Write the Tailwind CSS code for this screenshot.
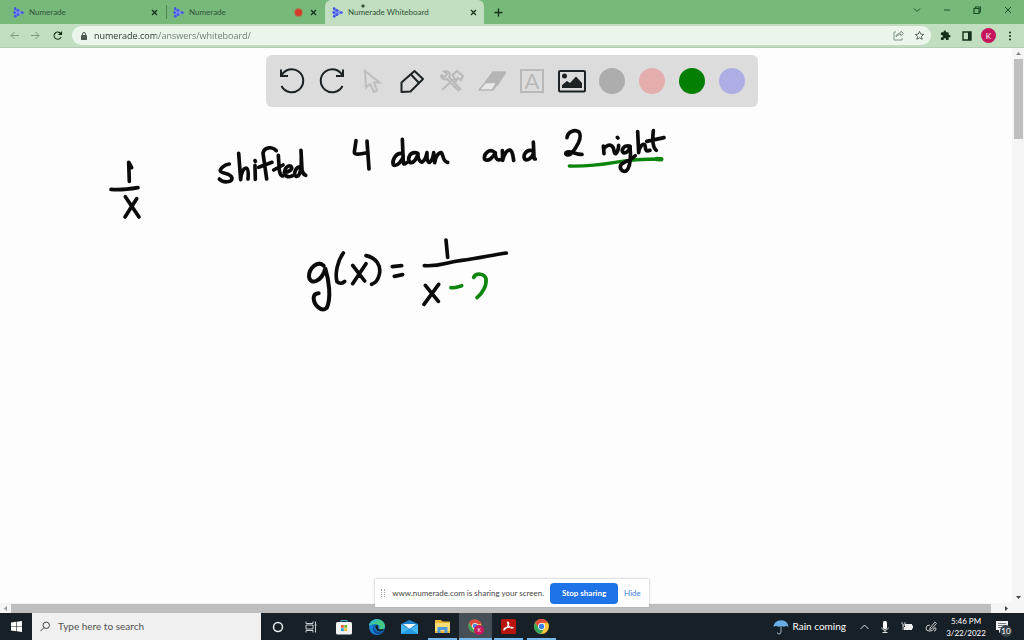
<!DOCTYPE html>
<html lang="en">
<head>
  <meta charset="UTF-8" />
  <meta name="viewport" content="width=device-width, initial-scale=1.0"/>
  <title>Numerade Whiteboard</title>
  <script src="https://cdn.jsdelivr.net/npm/@tailwindcss/browser@4"></script>
</head>
<body class="relative flex h-screen flex-col overflow-hidden bg-[#fdfdfd] font-[Lato,sans-serif] text-[8px]">
  <!-- Shared logo -->
  <svg class="hidden">
    <symbol id="logo" viewBox="0 0 20 20">
      <path d="M3 1 L19 10 L3 19 Z" fill="#7b92e8"/>
      <g fill="#4455e6"><circle cx="4" cy="3" r="2.5"/><circle cx="9" cy="6" r="2.5"/><circle cx="17" cy="10" r="2.5"/><circle cx="9" cy="14" r="2.5"/><circle cx="4" cy="17" r="2.5"/><circle cx="3" cy="10" r="2.5"/></g>
    </symbol>
  </svg>

  <!-- Tabs -->
  <header class="flex h-6 shrink-0 items-center bg-[#77b97a] text-[#2f5336]">
    <div class="flex h-full w-[166px] items-center pr-2 pl-[13px]">
      <svg class="mr-[5px] size-[11px]"><use href="#logo"/></svg>
      <span class="flex-1">Numerade</span>
      <button aria-label="Close tab" class="text-[#12331a]"><svg class="size-[7px]" viewBox="0 0 7 7" fill="none" stroke="currentColor" stroke-width="1.3"><path d="M1 1l5 5M6 1L1 6"/></svg></button>
    </div>
    <div class="flex h-full w-[159px] items-center pr-2">
      <i class="mr-1.5 h-3.5 w-px bg-[#4d8553]"></i>
      <svg class="mr-[5px] size-[11px]"><use href="#logo"/></svg>
      <span class="flex-1">Numerade</span>
      <span class="mr-2 size-[7px] rounded-full bg-[#d23c2c] ring-1 ring-[#a08a55]"></span>
      <button aria-label="Close tab" class="text-[#12331a]"><svg class="size-[7px]" viewBox="0 0 7 7" fill="none" stroke="currentColor" stroke-width="1.3"><path d="M1 1l5 5M6 1L1 6"/></svg></button>
    </div>
    <div class="relative flex h-full w-[159px] items-center rounded-t-md bg-[#c1dfc0] pr-[7px] pl-[7px]">
      <svg class="mr-[5px] size-[11px]"><use href="#logo"/></svg>
      <span class="flex-1">Numerade Whiteboard</span>
      <button aria-label="Close tab" class="text-[#12331a]"><svg class="size-[7px]" viewBox="0 0 7 7" fill="none" stroke="currentColor" stroke-width="1.3"><path d="M1 1l5 5M6 1L1 6"/></svg></button>
      <svg class="absolute top-1 left-9 size-1" viewBox="0 0 4 4"><path d="M2 0l2 2-2 2-2-2z" fill="#2f5336"/></svg>
    </div>
    <button aria-label="New tab" class="ml-2.5 text-[#12331a]"><svg class="size-[9px]" viewBox="0 0 9 9" fill="none" stroke="currentColor" stroke-width="1.4"><path d="M4.500 .5v8M.5 4.500h8"/></svg></button>
    <div class="ml-auto flex items-center pb-1 text-[#1b5024]">
      <button aria-label="Search tabs" class="grid w-[30px] place-items-center"><svg class="size-2" viewBox="0 0 8 8" fill="none" stroke="currentColor"><path d="M1 2.500l3 3 3-3"/></svg></button>
      <button aria-label="Minimize" class="grid w-[30px] place-items-center"><svg class="size-2" viewBox="0 0 8 8" fill="none" stroke="currentColor"><path d="M1 4h6"/></svg></button>
      <button aria-label="Restore" class="grid w-[30px] place-items-center"><svg class="size-2" viewBox="0 0 8 8" fill="none" stroke="currentColor" stroke-width="1.200"><path d="M1 2.500h5v5H1zM2.500 2V1h5v5H6.500"/></svg></button>
      <button aria-label="Close" class="grid w-8 place-items-center"><svg class="size-2" viewBox="0 0 8 8" fill="none" stroke="currentColor"><path d="M1 1l6 6M7 1L1 7"/></svg></button>
    </div>
  </header>

  <!-- Address bar -->
  <nav class="flex h-6 shrink-0 items-center border-b border-[#b4ccb6] bg-[#c1dfc0] text-[#14301a]">
    <button aria-label="Back" class="ml-2.5 text-[#7b9c7e]"><svg class="size-[9px]" viewBox="0 0 9 9" fill="none" stroke="currentColor"><path d="M9 4.500H1M4.500 1L1 4.500 4.500 8"/></svg></button>
    <button aria-label="Forward" class="ml-3 text-[#7b9c7e]"><svg class="size-[9px]" viewBox="0 0 9 9" fill="none" stroke="currentColor"><path d="M0 4.500h8M4.500 1L8 4.500 4.500 8"/></svg></button>
    <button aria-label="Reload" class="ml-3"><svg class="size-[11px]" viewBox="0 0 24 24" fill="currentColor"><path d="M18.500 5.500A9 9 0 1 0 21 15h-2.800a6.400 6.400 0 1 1-1.600-7.500L13 11h9V2z"/></svg></button>
    <div class="ml-[9px] flex h-[19px] flex-1 items-center rounded-full bg-[#ebf5ec] pr-1.5 pl-2">
      <svg class="mr-1.5 size-2" viewBox="0 0 8 8"><rect x="1" y="3" width="6" height="5" rx=".6" fill="#4d5a50"/><path d="M2.500 3.500V2a1.500 1.500 0 0 1 3 0v1.500" fill="none" stroke="#4d5a50"/></svg>
      <input aria-label="Address" value="numerade.com/answers/whiteboard/" class="flex-1 bg-[linear-gradient(90deg,#26332a_62px,#69776c_62px)] bg-clip-text font-['Open_Sans',sans-serif] text-[9px] text-transparent outline-none"/>
      <button aria-label="Share" class="text-[#839386]"><svg class="size-[11px]" viewBox="0 0 11 11" fill="none" stroke="currentColor"><path d="M3 2H1v8h8V8M3 7c0-2.500 2-4 5-4V1l2.500 2.500L8 6V4.500C5.500 4.500 4 5.500 3 7z"/></svg></button>
      <button aria-label="Bookmark" class="ml-2.5 text-[#4c5a4f]"><svg class="size-[11px]" viewBox="0 0 24 24" fill="none" stroke="currentColor" stroke-width="2"><path d="M12 3l2.700 6 6.500.6-4.900 4.300 1.500 6.400L12 17l-5.800 3.300 1.500-6.400-4.900-4.300 6.500-.6z"/></svg></button>
    </div>
    <button aria-label="Extensions" class="ml-[9px]"><svg class="size-[11px]" viewBox="0 0 24 24" fill="currentColor"><path d="M20.500 11H19V7a2 2 0 0 0-2-2h-4V3.500a2.500 2.500 0 0 0-5 0V5H4a2 2 0 0 0-2 2v3.800h1.500a2.700 2.700 0 0 1 0 5.400H2V20a2 2 0 0 0 2 2h3.800v-1.500a2.700 2.700 0 0 1 5.400 0V22H17a2 2 0 0 0 2-2v-4h1.500a2.500 2.500 0 0 0 0-5z"/></svg></button>
    <button aria-label="Side panel" class="ml-[11px]"><svg class="size-2.5" viewBox="0 0 10 10"><path d="M1 1h8v8H1z" fill="none" stroke="currentColor" stroke-width="1.4"/><path d="M6 1h3v8H6z" fill="currentColor"/></svg></button>
    <button aria-label="Profile" class="ml-[9px] grid size-[15px] place-items-center rounded-full bg-[#c5165b] text-[8px] text-white">K</button>
    <button aria-label="Menu" class="mr-3 ml-3"><svg class="h-2.5 w-1" viewBox="0 0 4 10" fill="currentColor"><circle cx="2" cy="1.400" r="1"/><circle cx="2" cy="5" r="1"/><circle cx="2" cy="8.600" r="1"/></svg></button>
  </nav>

  <!-- Whiteboard -->
  <main class="flex min-h-0 flex-1">
    <div class="relative min-w-0 flex-1 overflow-hidden">
      <svg class="h-[272px] w-[700px] max-w-none" viewBox="0 48 700 272" fill="none" stroke="#0b0b0b" stroke-linecap="round" stroke-linejoin="round" role="img" aria-label="1/x shifted 4 down and 2 right, g(x) = 1/(x-2)">
        <g transform="translate(100 120) scale(.33333)" stroke-width="11">
          <path d="M86 127L88 184M87 128L95 143M33 208C60 211 90 207 114 203M76 230L117 291M110 236L75 291"/>
          <path d="M388 132C373 134 360 146 361 153C364 162 392 158 396 174C397 187 370 190 358 177"/>
          <path d="M416 100L422 179C423 158 430 145 438 144C447 146 445 166 444 177M465 136L466 178M465 122L466 124"/>
          <path d="M529 92C517 79 493 80 489 99L500 177M476 142L516 127M535 106L538 151C540 163 545 168 549 168M521 150L549 135"/>
          <path d="M553 157C570 156 579 146 573 139C563 133 551 148 555 162C560 174 573 171 582 165M604 141C587 138 579 162 588 169C598 171 607 153 603 91L606 150C608 159 611 164 617 166"/>
        </g>
        <g transform="translate(340 120) scale(.33333)" stroke-width="11">
          <path d="M48 62L43 96C42 106 62 102 84 98M81 63L87 147"/>
          <path d="M187 101C169 96 155 120 160 135C171 142 189 119 190 108M187 58L190 129C191 135 196 131 201 127"/>
          <path d="M232 99C209 93 202 115 209 127C221 133 232 112 234 101C233 116 240 128 247 126C256 121 259 108 261 98C260 114 262 128 269 127C278 120 280 109 281 98L284 128C286 111 295 98 304 98C311 104 307 124 323 127"/>
          <path d="M465 98C448 82 430 103 434 118C444 126 460 113 466 98C465 113 471 122 480 119M487 92L488 121C491 104 501 89 510 90C519 94 519 110 521 121M577 92C558 88 548 105 554 117C562 124 578 113 581 98M580 66L582 110C582 115 584 117 586 117"/>
          <path d="M681 53C683 35 704 27 717 36C729 52 708 86 692 102C684 108 674 104 678 98C690 89 708 105 726 103"/>
          <path d="M790 78L792 101M791 88C798 75 808 73 816 78C824 84 820 101 827 101C835 95 835 84 836 76M832 52L834 54M866 78C851 75 842 91 850 98C862 101 869 87 870 79"/>
          <path d="M688 138C730 139 790 133 825 127C877 118 910 117 965 117" stroke="#0c850c" stroke-width="10"/>
          <path d="M950 117L964 118" stroke="#0c850c" stroke-width="13"/>
          <path d="M870 79C874 112 870 144 858 153C846 157 837 145 843 134C852 124 875 120 886 107M893 35L896 98C898 80 908 69 914 74C919 82 912 98 930 91M940 32C936 65 940 84 949 91M920 64L972 53"/>
        </g>
        <g transform="translate(295 230) scale(.33333)" stroke-width="11">
          <path d="M86 107C68 89 42 115 42 139C45 168 80 155 91 116C101 148 110 205 95 234C77 248 56 223 56 203C57 193 64 190 71 190" stroke-width="12"/>
          <path d="M145 69C128 92 119 130 126 155C134 163 143 160 149 154M173 106L209 153M213 101L173 161M213 77C244 83 259 107 253 133C249 151 241 159 230 163"/>
          <path d="M292 110L320 107M298 139L323 134M453 30L458 82M388 107C440 110 450 97 500 91C550 85 590 75 634 69M391 166L430 214M431 163L387 223"/>
          <path d="M468 173C477 175 490 170 500 167M536 142C543 128 568 130 573 146C576 167 562 190 546 203" stroke="#0c850c"/>
        </g>
      </svg>
    </div>
    <div class="flex w-3 shrink-0 flex-col items-center bg-[#f5f5f5]">
      <svg class="my-1 h-[3px] w-[5px] shrink-0" viewBox="0 0 5 3"><path d="M0 3l2.500-3L5 3z" fill="#888"/></svg>
      <div class="h-20 w-[9px] bg-[#bfbfbf]"></div>
      <svg class="mt-auto mb-1 h-[3px] w-[5px] shrink-0" viewBox="0 0 5 3"><path d="M0 0h5L2.500 3z" fill="#444"/></svg>
    </div>
  </main>
  <div class="flex h-2.5 shrink-0 items-center bg-[#f5f5f5]">
    <svg class="mx-1 h-[5px] w-[3px]" viewBox="0 0 3 5"><path d="M3 0v5L0 2.500z" fill="#999"/></svg>
    <div class="h-[9px] flex-1 bg-[#bebebe]"></div>
    <svg class="mr-4 ml-3.5 h-[5px] w-[3px]" viewBox="0 0 3 5"><path d="M0 0v5l3-2.500z" fill="#444"/></svg>
  </div>

  <!-- Drawing tools -->
  <div class="absolute inset-x-0 top-[55px] flex justify-center">
    <div class="flex rounded-md bg-[#dcdcdc] px-1.5 py-1.5 text-[#1d2225]">
      <button aria-label="Undo" class="grid size-10 place-items-center"><svg class="size-7" viewBox="0 0 28 28" fill="none" stroke="currentColor" stroke-width="2"><path d="M3 2.500V9H10M3.500 8.500A11.500 11.500 0 1 1 3.500 19"/></svg></button>
      <button aria-label="Redo" class="grid size-10 place-items-center"><svg class="size-7" viewBox="0 0 28 28" fill="none" stroke="currentColor" stroke-width="2"><path d="M25 2.500V9H18M24.500 8.500A11.500 11.500 0 1 0 24.500 19"/></svg></button>
      <button aria-label="Select" class="grid size-10 place-items-center text-[#bebebe]"><svg class="size-7" viewBox="0 0 28 28" fill="none" stroke="currentColor" stroke-width="2"><path d="M7 4L8 20.500L12 17L16 25L19 23.500L16 15.500H21.500Z"/></svg></button>
      <button aria-label="Pen" class="grid size-10 place-items-center"><svg class="size-7" viewBox="0 0 28 28" fill="none" stroke="currentColor" stroke-width="2" stroke-linejoin="round"><path d="M3.500 25V15.500L16.500 4L25 12L12.500 24.500ZM13 7.500L21 16"/></svg></button>
      <button aria-label="Tools" class="grid size-10 place-items-center text-[#b9b9b9]"><svg class="size-7" viewBox="0 0 28 28" fill="none" stroke="currentColor" stroke-width="2"><path d="M3 8L7 10L9 7L6 4.500C11 3 13 7 11 10L23 23M3 8C3 12 7 13 9 12L21 24M4 23L17 11M14.500 8L19 4L25 9L23 13L20 11L18 14Z"/></svg></button>
      <button aria-label="Eraser" class="grid size-10 place-items-center text-[#b5b5b5]"><svg class="size-7" viewBox="0 0 28 28" stroke="currentColor" stroke-width="1.500" stroke-linejoin="round"><path d="M15 5H28L19 18L17 15H7.500Z" fill="currentColor"/><path d="M7.500 15.500H19L14.500 23H1Z" fill="#e8e8e8"/><path d="M19 15.500L22 14L14.500 23Z" fill="currentColor"/></svg></button>
      <button aria-label="Text" class="grid size-10 place-items-center text-[#b9b9b9]"><span class="grid size-6 place-items-center border-2 border-current text-[22px]/5">A</span></button>
      <button aria-label="Image" class="grid size-10 place-items-center"><svg class="h-6 w-7" viewBox="0 0 28 24"><rect x="1" y="2" width="26" height="20.500" rx="1" fill="none" stroke="currentColor" stroke-width="2"/><circle cx="6.500" cy="7" r="2.500" fill="currentColor"/><path d="M4 19V16L9 12L12 14L18 7.500L24 14V19Z" fill="currentColor"/></svg></button>
      <button aria-label="Gray" class="grid size-10 place-items-center"><span class="size-[26px] rounded-full bg-[#adadad]"></span></button>
      <button aria-label="Red" class="grid size-10 place-items-center"><span class="size-[26px] rounded-full bg-[#e4aeae]"></span></button>
      <button aria-label="Green" class="grid size-10 place-items-center"><span class="size-[26px] rounded-full bg-[#038003]"></span></button>
      <button aria-label="Blue" class="grid size-10 place-items-center"><span class="size-[26px] rounded-full bg-[#aeaee4]"></span></button>
    </div>
  </div>

  <!-- Screen share notice -->
  <div class="absolute inset-x-0 bottom-[33px] flex justify-center">
    <div class="flex h-7 items-center bg-white pr-2 pl-1.5 text-[#454545] shadow-[0_0_2px_#aaa]">
      <i class="mr-[7px] h-2 w-1 border-x border-dotted border-[#aaa]"></i>
      <span class="mr-1.5">www.numerade.com is sharing your screen.</span>
      <button class="mr-1.5 h-[21px] w-[68px] rounded-sm bg-[#1f73e8] font-bold text-white">Stop sharing</button>
      <button class="text-[#3f7fe0]">Hide</button>
    </div>
  </div>

  <!-- Taskbar -->
  <footer class="flex h-[27px] shrink-0 items-center bg-[#172026] text-white">
    <button aria-label="Start" class="grid w-8 place-items-center"><svg class="size-[11px]" viewBox="0 0 11 11" fill="#fff"><path d="M0 1.500L5 .8V5.200H0zM5.600 .7L11 0v5.200H5.600zM0 5.800h5v4.400L0 9.500zM5.600 5.800H11V11l-5.400-.7z"/></svg></button>
    <label class="flex h-full w-[229px] items-center bg-[#f0f0f0] pl-2">
      <svg class="mr-2 size-[11px]" viewBox="0 0 11 11" fill="none" stroke="#333"><circle cx="6.800" cy="4.200" r="3.500"/><path d="M4.300 6.700L.5 10.500"/></svg>
      <input aria-label="Search" placeholder="Type here to search" class="w-full text-[10px] outline-none placeholder:text-[#505050]"/>
    </label>
    <div class="flex h-full">
      <button aria-label="Cortana" class="grid w-[33px] place-items-center"><svg class="size-3" viewBox="0 0 12 12"><circle cx="6" cy="6" r="4.500" fill="none" stroke="#e8edf0" stroke-width="1.500"/></svg></button>
      <button aria-label="Task view" class="grid w-[33px] place-items-center"><svg class="size-3" viewBox="0 0 12 12" fill="none" stroke="#c8ced2"><path d="M1 .5V2.500H8V.5M1 4h7v4H1zM1 11.500V9.500H8v2M10.500 .5v11M9.500 4h2"/></svg></button>
      <button aria-label="Store" class="grid w-[33px] place-items-center"><svg class="size-4" viewBox="0 0 16 16"><path d="M5 4V1.500h6V4" fill="none" stroke="#49aee0"/><rect y="3" width="16" height="12.500" rx="1.500" fill="#f1f3f4"/><path d="M5 6h2.800v2.800H5z" fill="#e85b3a"/><path d="M8.300 6h2.800v2.800H8.300z" fill="#76b82a"/><path d="M5 9.300h2.800v2.800H5z" fill="#2b9ce0"/><path d="M8.300 9.300h2.800v2.800H8.300z" fill="#f4b928"/></svg></button>
      <button aria-label="Edge" class="grid w-[33px] place-items-center"><svg class="size-4" viewBox="0 0 16 16"><circle cx="8" cy="8" r="8" fill="#1682d4"/><path d="M0 7C1-2 15-2 16 7c0 4-5 4-6 3 2-3-1-5-4-5S1 6 0 7z" fill="#45c989"/><path d="M0 7C1 2 7-1 11 2 7 1 2 4 0 7z" fill="#30b8df"/><path d="M7 5c-3 2-2 8 4 8 2 0 4-1 4-1-3 5-10 4-11-1-.5-3 1-5 3-6z" fill="#11519c"/><path d="M7 6c-1 1-1 4 2 6 2 1 5 0 6-1l1 1-2-2c-3 1-5 0-5-1 1-2 0-3-2-3z" fill="#172026"/></svg></button>
      <button aria-label="Mail" class="grid w-[33px] place-items-center"><svg class="h-3.5 w-[17px]" viewBox="0 0 17 14"><path d="M0 4L8.500 0 17 4v10H0z" fill="#1c83cf"/><path d="M2 4h13L8.500 9z" fill="#f3f7fb"/><path d="M0 4l8.500 5.500L17 4v10H0z" fill="#45b6f0"/><path d="M0 14l8.500-5.500L17 14z" fill="#2199e3"/></svg></button>
      <button aria-label="File Explorer" class="relative grid w-[33px] place-items-center"><svg class="h-[13px] w-[15px]" viewBox="0 0 15 13"><path d="M0 0h6l1.500 1.500H15V13H0z" fill="#e9b636"/><path d="M0 3h15v8H0z" fill="#fbdc75"/><path d="M2.500 13V7h10v6h-3v-3h-4v3z" fill="#4a9bdc"/></svg><i class="absolute inset-x-0.5 bottom-0 h-0.5 bg-[#76b9ed]"></i></button>
      <button aria-label="Chrome, Numerade" class="relative grid w-[33px] place-items-center bg-[#454f55]"><svg class="size-4" viewBox="0 0 16 16"><circle cx="7" cy="7" r="6.500" fill="#e6ba38"/><path d="M1 4a7 7 0 0 1 12.500 1H7L5 9z" fill="#d94b3d"/><path d="M1 4l4 6 3 3.500A7 7 0 0 1 1 4z" fill="#36a25a"/><circle cx="7" cy="7" r="3" fill="#eee"/><circle cx="7" cy="7" r="2.300" fill="#4c86df"/><circle cx="11" cy="11" r="5" fill="#c8195f"/><text x="9.500" y="13" font-size="5" fill="#fff">K</text></svg><i class="absolute inset-x-0 bottom-0 h-0.5 bg-[#76b9ed]"></i></button>
      <button aria-label="Acrobat" class="relative grid w-[33px] place-items-center"><svg class="size-[15px]" viewBox="0 0 15 15"><rect width="15" height="15" rx="1.500" fill="#b9150f"/><path d="M6.500 3c3 0 0 6-3.500 8-1-2 4-3.500 9-2.500-1 2-5.500-1-5.500-5.500z" fill="none" stroke="#fff" stroke-width="1.100"/></svg><i class="absolute inset-x-0.5 bottom-0 h-0.5 bg-[#76b9ed]"></i></button>
      <button aria-label="Chrome" class="relative grid w-[33px] place-items-center"><svg class="size-[15px]" viewBox="0 0 14 14"><circle cx="7" cy="7" r="7" fill="#f6c63b"/><path d="M1 3.500a7 7 0 0 1 12.200 0H7L4.500 8.500z" fill="#e14b3d"/><path d="M1 3.500l3.500 5L9 9.500 6.500 14A7 7 0 0 1 1 3.500z" fill="#36a558"/><circle cx="7" cy="7" r="3.200" fill="#fff"/><circle cx="7" cy="7" r="2.500" fill="#397fe5"/></svg><i class="absolute inset-x-0.5 bottom-0 h-0.5 bg-[#76b9ed]"></i></button>
    </div>
    <div class="ml-auto flex h-full items-center">
      <button class="flex items-center gap-1 text-[10px]"><svg class="size-4" viewBox="0 0 16 16"><path d="M8 1.500V13q0 2-2 2t-1.500-1.500" fill="none" stroke="#9eb7ca"/><path d="M.5 8C1 3 4 1.500 8 1.500S15 3 15.500 8Q13 6 11 8 8 6 5.500 8 3 6 .5 8z" fill="#6aaee8"/></svg>Rain coming</button>
      <button aria-label="Hidden icons" class="ml-3.5"><svg class="block h-2 w-[9px]" viewBox="0 0 9 8" fill="none" stroke="#ddd"><path d="M.5 6L4.500 2l4 4"/></svg></button>
      <button aria-label="Microphone" class="ml-3"><svg class="block h-3 w-2" viewBox="0 0 8 12"><rect x="2" width="4" height="8" rx="1.500" fill="#fff"/><path d="M.8 6.500C1 10 7 10 7.200 6.500M4 9v2M1.500 11.500h5" fill="none" stroke="#ddd"/></svg></button>
      <button aria-label="Battery" class="ml-3"><svg class="block h-[9px] w-3" viewBox="0 0 12 9"><path d="M1 0v2h1v2h1V2h1V0M2 4v4" stroke="#ddd" stroke-width=".8" fill="none"/><path d="M4 2h7v1.500h1v3h-1V8H3V5h1z" fill="#eee"/></svg></button>
      <button aria-label="Pen workspace" class="ml-3"><svg class="block size-3" viewBox="0 0 12 12" fill="none" stroke="#ccc"><path d="M5 7L10 1l1.500 1.500L6.500 8 4.500 8.500zM5 4Q1 4 1 7t3 3q5 0 5-3 2-1 2 1t-2 2"/></svg></button>
      <button class="ml-1.5 w-[46px] text-center text-[8px]/3">5:46 PM<br>3/22/2022</button>
      <button aria-label="10 notifications" class="relative mr-3 ml-[7px] h-4 w-4"><svg class="size-3" viewBox="0 0 12 12"><path d="M0 0h12v9H6l-3 3V9H0z" fill="#f1f1f1"/><path d="M2 2.500h8M2 4.500h8M2 6.500h5" stroke="#53606a" stroke-width=".8"/></svg><span class="absolute top-1.5 left-1 grid size-3 place-items-center rounded-full bg-[#39434a] text-[8px]">10</span></button>
    </div>
  </footer>
</body>
</html>
